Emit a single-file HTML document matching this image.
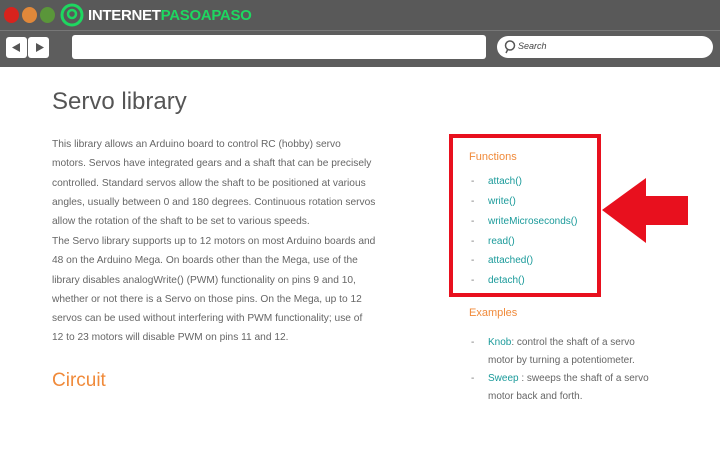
<!DOCTYPE html>
<html><head><style>
body{margin:0;width:720px;height:450px;overflow:hidden;background:#fff;font-family:"Liberation Sans",sans-serif;position:relative}
.top{position:absolute;left:0;top:0;width:720px;height:30px;background:#595959}
.bar{position:absolute;left:0;top:30px;width:720px;height:36px;background:#5d5d5d;border-top:1px solid #777}
.dot{position:absolute;top:7px;width:15px;height:16px;border-radius:50%}
.btn{position:absolute;top:37px;width:21px;height:21px;background:#fff;border-radius:3px}
.p{position:absolute;left:52px;width:360px;font-size:10.2px;line-height:19.3px;color:#666;white-space:nowrap}
.fl{position:absolute;left:488px;font-size:10px;color:#1a9a9a}
.dash{position:absolute;left:471px;font-size:10px;line-height:18px;color:#777}
</style></head><body>
<div class="top"></div>
<div class="dot" style="left:4px;background:#d8231d"></div>
<div class="dot" style="left:22px;background:#e0883a"></div>
<div class="dot" style="left:40px;background:#5a963a"></div>
<svg style="position:absolute;left:60px;top:3px" width="24" height="24"><circle cx="12" cy="12" r="10" fill="none" stroke="#1ed760" stroke-width="3"/><circle cx="12" cy="11" r="4" fill="none" stroke="#1ed760" stroke-width="2.5"/></svg>
<div style="position:absolute;left:88px;top:7px;font-size:15px;font-weight:bold;letter-spacing:-0.3px;color:#fff">INTERNET<span style="color:#1ed760">PASOAPASO</span></div>
<div class="bar"></div>
<div class="btn" style="left:6px"><svg width="21" height="21"><path d="M14 6 L6 10.5 L14 15Z" fill="#555"/></svg></div>
<div class="btn" style="left:28px"><svg width="21" height="21"><path d="M8 6 L16 10.5 L8 15Z" fill="#555"/></svg></div>
<div style="position:absolute;left:72px;top:35px;width:414px;height:24px;background:#fff;border-radius:3px"></div>
<div style="position:absolute;left:497px;top:36px;width:216px;height:22px;background:#fff;border-radius:11px"></div>
<svg style="position:absolute;left:503px;top:39px" width="14" height="16"><circle cx="7" cy="6.5" r="4.5" fill="none" stroke="#555" stroke-width="1.5"/><path d="M5 10 L3 14" stroke="#555" stroke-width="1.5"/></svg>
<div style="position:absolute;left:518px;top:41px;font-size:9px;font-style:italic;color:#444">Search</div>
<div style="position:absolute;left:52px;top:88px;font-size:24px;color:#555">Servo library</div>
<div class="p" style="top:135px">This library allows an Arduino board to control RC (hobby) servo<br>motors. Servos have integrated gears and a shaft that can be precisely<br>controlled. Standard servos allow the shaft to be positioned at various<br>angles, usually between 0 and 180 degrees. Continuous rotation servos<br>allow the rotation of the shaft to be set to various speeds.</div>
<div class="p" style="top:232px">The Servo library supports up to 12 motors on most Arduino boards and<br>48 on the Arduino Mega. On boards other than the Mega, use of the<br>library disables analogWrite() (PWM) functionality on pins 9 and 10,<br>whether or not there is a Servo on those pins. On the Mega, up to 12<br>servos can be used without interfering with PWM functionality; use of<br>12 to 23 motors will disable PWM on pins 11 and 12.</div>
<div style="position:absolute;left:52px;top:370px;font-size:19px;color:#f08a3a">Circuit</div>
<div style="position:absolute;left:449px;top:134px;width:144px;height:155px;border:4px solid #e8101e"></div>
<div style="position:absolute;left:469px;top:151px;font-size:11px;color:#f08a3a">Functions</div>
<div class="dash" style="top:173px">-</div><div class="fl" style="top:176px">attach()</div>
<div class="dash" style="top:193px">-</div><div class="fl" style="top:196px">write()</div>
<div class="dash" style="top:213px">-</div><div class="fl" style="top:216px">writeMicroseconds()</div>
<div class="dash" style="top:233px">-</div><div class="fl" style="top:236px">read()</div>
<div class="dash" style="top:252px">-</div><div class="fl" style="top:255px">attached()</div>
<div class="dash" style="top:272px">-</div><div class="fl" style="top:275px">detach()</div>
<svg style="position:absolute;left:600px;top:175px" width="92" height="72"><path d="M2 35 L46 3 L46 21 L88 21 L88 50 L46 50 L46 68 Z" fill="#e8101e"/></svg>
<div style="position:absolute;left:469px;top:307px;font-size:11px;color:#f08a3a">Examples</div>
<div class="dash" style="top:334px">-</div>
<div style="position:absolute;left:488px;top:334px;font-size:10px;line-height:18px;color:#666;white-space:nowrap"><span style="color:#1a9a9a">Knob</span>: control the shaft of a servo<br>motor by turning a potentiometer.</div>
<div class="dash" style="top:370px">-</div>
<div style="position:absolute;left:488px;top:370px;font-size:10px;line-height:18px;color:#666;white-space:nowrap"><span style="color:#1a9a9a">Sweep</span> : sweeps the shaft of a servo<br>motor back and forth.</div>
</body></html>
